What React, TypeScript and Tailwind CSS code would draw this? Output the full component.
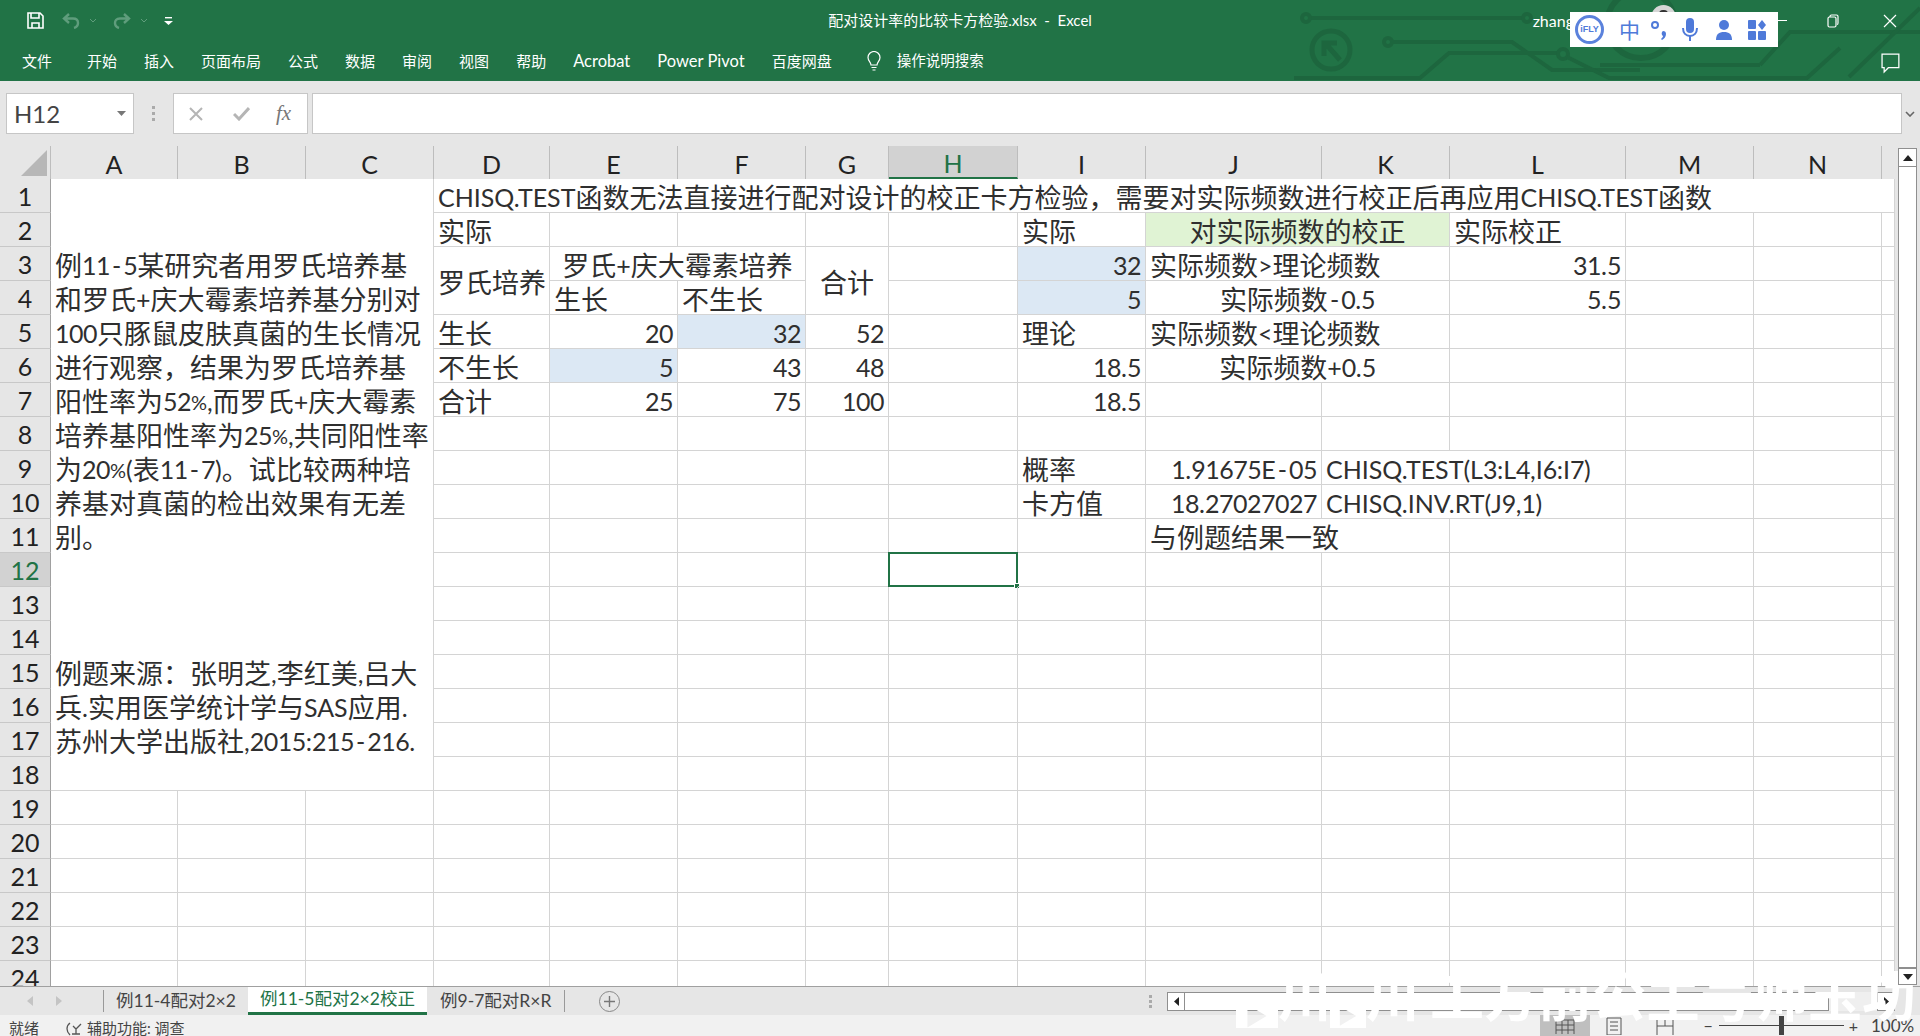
// Excel window: ribbon tabs, formula bar, one sheet with merged cells, sheet tabs and status bar.
import { Fragment } from "react";

type Cell = { text?: string; span?: string; className?: string };

const COLS = ["A", "B", "C", "D", "E", "F", "G", "H", "I", "J", "K", "L", "M", "N", "O"];
const COL_WIDTHS = [127, 128, 128, 116, 128, 128, 83, 129, 128, 176, 128, 176, 128, 128, 13];
const ROWS = Array.from({ length: 24 }, (_, i) => i + 1);

const RIGHT = "justify-end";
const CENTER = "justify-center";
const BLUE = "bg-[#dce8f4]";

// Merged cells are listed by their first cell, the rest are in COVERED.
const CELLS: Record<string, Cell> = {
  D1: { text: "CHISQ.TEST函数无法直接进行配对设计的校正卡方检验，需要对实际频数进行校正后再应用CHISQ.TEST函数", span: "col-span-12" },
  D2: { text: "实际" },
  I2: { text: "实际" },
  J2: { text: "对实际频数的校正", span: "col-span-2", className: `${CENTER} bg-[#e0f3d4]` },
  L2: { text: "实际校正" },
  D3: { text: "罗氏培养", span: "row-span-2" },
  E3: { text: "罗氏+庆大霉素培养", span: "col-span-2", className: CENTER },
  G3: { text: "合计", span: "row-span-2", className: CENTER },
  I3: { text: "32", className: `${RIGHT} ${BLUE}` },
  J3: { text: "实际频数>理论频数", span: "col-span-2" },
  L3: { text: "31.5", className: RIGHT },
  E4: { text: "生长" },
  F4: { text: "不生长" },
  I4: { text: "5", className: `${RIGHT} ${BLUE}` },
  J4: { text: "实际频数-0.5", span: "col-span-2", className: CENTER },
  L4: { text: "5.5", className: RIGHT },
  D5: { text: "生长" },
  E5: { text: "20", className: RIGHT },
  F5: { text: "32", className: `${RIGHT} ${BLUE}` },
  G5: { text: "52", className: RIGHT },
  I5: { text: "理论" },
  J5: { text: "实际频数<理论频数", span: "col-span-2" },
  D6: { text: "不生长" },
  E6: { text: "5", className: `${RIGHT} ${BLUE}` },
  F6: { text: "43", className: RIGHT },
  G6: { text: "48", className: RIGHT },
  I6: { text: "18.5", className: RIGHT },
  J6: { text: "实际频数+0.5", span: "col-span-2", className: CENTER },
  D7: { text: "合计" },
  E7: { text: "25", className: RIGHT },
  F7: { text: "75", className: RIGHT },
  G7: { text: "100", className: RIGHT },
  I7: { text: "18.5", className: RIGHT },
  I9: { text: "概率" },
  J9: { text: "1.91675E-05", className: RIGHT },
  K9: { text: "CHISQ.TEST(L3:L4,I6:I7)", span: "col-span-2" },
  I10: { text: "卡方值" },
  J10: { text: "18.27027027", className: RIGHT },
  K10: { text: "CHISQ.INV.RT(J9,1)", span: "col-span-2" },
  J11: { text: "与例题结果一致", span: "col-span-2" },
};

const COVERED = new Set([
  "K2", "F3", "K3", "D4", "G4", "K4", "K5", "K6", "L9", "L10", "K11",
  "E1", "F1", "G1", "H1", "I1", "J1", "K1", "L1", "M1", "N1", "O1",
]);

const NOTE_LINES = [
  "", "",
  "例11-5某研究者用罗氏培养基",
  "和罗氏+庆大霉素培养基分别对",
  "100只豚鼠皮肤真菌的生长情况",
  "进行观察，结果为罗氏培养基",
  "阳性率为52%,而罗氏+庆大霉素",
  "培养基阳性率为25%,共同阳性率",
  "为20%(表11-7)。试比较两种培",
  "养基对真菌的检出效果有无差",
  "别。",
  "", "", "",
  "例题来源：张明芝,李红美,吕大",
  "兵.实用医学统计学与SAS应用.",
  "苏州大学出版社,2015:215-216.",
  "",
];

const MENU = ["开始", "插入", "页面布局", "公式", "数据", "审阅", "视图", "帮助", "Acrobat", "Power Pivot", "百度网盘"];

// Cell font: digits are narrower than Lato's, the percent sign too, the hyphen is wider.
function CellText({ text }: { text: string }) {
  const parts = text.split(/([0-9]+|%|-|[A-Za-z.:(),+<>]+)/).filter(Boolean);
  return (
    <>
      {parts.map((p, i) => {
        if (/^[0-9]/.test(p)) return <span key={i} className="text-[25px] tracking-[-0.5px]">{p}</span>;
        if (p === "%") return <span key={i} className="text-[20px]">{p}</span>;
        if (p === "-") return <span key={i} className="px-[2px] text-[25px]">{p}</span>;
        if (/^[A-Za-z.:(),+<>]/.test(p)) return <span key={i} className="text-[25px]">{p}</span>;
        return <Fragment key={i}>{p}</Fragment>;
      })}
    </>
  );
}

function CircuitArt() {
  return (
    <svg className="absolute left-[1280px] top-0 h-[81px] w-[640px]" viewBox="1280 0 640 81" fill="none" stroke="#1d663e" strokeWidth="4">
      <path d="M1310 18H1522" />
      <circle cx="1306" cy="18" r="4" />
      <circle cx="1527" cy="18" r="4" />
      <circle cx="1331" cy="50" r="19" strokeWidth="5" />
      <path d="M1340 60L1326 44M1324 56V43H1337" strokeWidth="5" />
      <circle cx="1388" cy="42" r="4" />
      <path d="M1392 42H1512L1552 70H1640" />
      <path d="M1294 78H1420L1449 53H1558" />
      <circle cx="1563" cy="54" r="5" />
      <path d="M1567 57L1609 78H1807L1840 48" />
      <path d="M1760 65L1790 32H1920" />
      <path d="M1600 65H1760" />
      <path d="M1849 77L1920 8" />
      <circle cx="1641" cy="24" r="34" strokeWidth="6" />
    </svg>
  );
}

function ImeToolbar() {
  return (
    <div className="absolute left-[1570px] top-[12px] flex h-[35px] w-[208px] items-center bg-white pl-[5px] text-[#4f7ad9]">
      <div className="flex h-[29px] w-[29px] items-center justify-center rounded-full border-[3px] border-[#5b82dc] font-['Liberation_Sans'] text-[9px] font-bold">iFLY</div>
      <span className="ml-[15px] text-[21px] leading-none">中</span>
      <svg className="ml-[11px]" width="18" height="24" viewBox="0 0 18 24" fill="currentColor">
        <circle cx="4" cy="7" r="3" fill="none" stroke="currentColor" strokeWidth="2" />
        <path d="M12 13a3 3 0 0 1 3 3c0 3-2 5-4 6l-1-1c1-1 2-2 2-3a3 3 0 0 1 0-5z" />
      </svg>
      <svg className="ml-[13px]" width="16" height="25" viewBox="0 0 16 25" fill="currentColor">
        <rect x="4" y="1" width="8" height="15" rx="4" />
        <path d="M1 11c0 5 3 8 7 8s7-3 7-8" fill="none" stroke="currentColor" strokeWidth="2" />
        <rect x="7" y="18" width="2" height="6" />
      </svg>
      <svg className="ml-[17px]" width="18" height="22" viewBox="0 0 18 22" fill="currentColor">
        <circle cx="9" cy="6" r="5" />
        <path d="M1 21c0-6 3-8 8-8s8 2 8 8z" />
      </svg>
      <svg className="ml-[15px]" width="19" height="20" viewBox="0 0 19 20" fill="currentColor">
        <rect x="0" y="0" width="8" height="9" rx="1" />
        <path d="M14 0l4 5-4 5-4-5z" />
        <rect x="0" y="11" width="8" height="9" rx="1" />
        <rect x="10" y="11" width="8" height="9" rx="1" />
      </svg>
    </div>
  );
}

function TitleBar() {
  return (
    <div className="relative h-[81px] overflow-hidden bg-[#217346] text-white">
      <CircuitArt />
      <div className="relative grid h-[41px] grid-cols-[1fr_auto_1fr] items-center">
        <div className="flex items-center pl-[27px]">
          <svg width="17" height="17" viewBox="0 0 17 17" fill="none" stroke="#fff" strokeWidth="1.6">
            <path d="M1 1H13L16 4V16H1Z" />
            <path d="M4 1V6H12V1" />
            <path d="M5 16V11H12V16" />
          </svg>
          <svg className="ml-[18px]" width="18" height="16" viewBox="0 0 18 16" fill="none" stroke="#5f9d7c" strokeWidth="2.4">
            <path d="M7 1L2 5.5L7 10M2 5.5H11C15 5.5 16 8 16 10C16 12.5 15 14 12 15" />
          </svg>
          <svg className="ml-[9px]" width="8" height="5" viewBox="0 0 8 5" fill="none" stroke="#5f9d7c"><path d="M1 1L4 4L7 1" /></svg>
          <svg className="ml-[16px]" width="18" height="16" viewBox="0 0 18 16" fill="none" stroke="#5f9d7c" strokeWidth="2.4">
            <path d="M11 1L16 5.5L11 10M16 5.5H7C3 5.5 2 8 2 10C2 12.5 3 14 6 15" />
          </svg>
          <svg className="ml-[9px]" width="8" height="5" viewBox="0 0 8 5" fill="none" stroke="#5f9d7c"><path d="M1 1L4 4L7 1" /></svg>
          <svg className="ml-[16px]" width="9" height="8" viewBox="0 0 9 8" fill="#fff"><rect x="1" y="0" width="7" height="1.4" /><path d="M0 4H9L4.5 8z" /></svg>
        </div>
        <div className="text-[15px]">配对设计率的比较卡方检验.xlsx&nbsp; - &nbsp;Excel</div>
        <div className="flex items-center justify-end">
          <span className="mr-[77px] text-[16px]">zhang</span>
          <div className="relative mr-[101px] h-[26px] w-[25px] -translate-y-[3px] rounded-full bg-[#d6d6d6]">
            <span className="absolute left-[8px] top-[5px] h-[8px] w-[9px] rounded-full bg-[#333]" />
          </div>
          <span className="mr-[40px] h-[1.5px] w-[10px] bg-white" />
          <svg className="mr-[44px]" width="12" height="14" viewBox="0 0 12 14" fill="none" stroke="#fff" strokeWidth="1.2">
            <rect x="1" y="3" width="8" height="10" rx="1.5" />
            <path d="M3 3V2.5C3 1.5 3.5 1 4.5 1H9.5C10.5 1 11 1.5 11 2.5V9C11 10 10.5 10.5 10 10.5" />
          </svg>
          <svg className="mr-[23px]" width="14" height="14" viewBox="0 0 14 14" stroke="#fff" strokeWidth="1.2"><path d="M1 1L13 13M13 1L1 13" /></svg>
        </div>
      </div>
      <div className="relative flex h-[40px] items-center pl-[22px] text-[15px]">
        <span className="mr-[35px]">文件</span>
        <div className="flex items-center gap-[27px]">
          {MENU.map((m) => (
            <span key={m} className={/^[A-Z]/.test(m) ? "text-[16.5px]" : ""}>{m}</span>
          ))}
        </div>
        <svg className="ml-[34px]" width="16" height="20" viewBox="0 0 16 20" fill="none" stroke="#fff" strokeWidth="1.2">
          <path d="M5 14C5 11 2 10 2 6.5A6 6 0 0 1 14 6.5C14 10 11 11 11 14Z" />
          <path d="M5.5 16.5H10.5M6.5 19H9.5" />
        </svg>
        <span className="ml-[15px] text-[14.5px]">操作说明搜索</span>
        <svg className="absolute left-[1881px] top-[12px]" width="26" height="22" viewBox="0 0 26 22" fill="none" stroke="#fff" strokeWidth="1.2">
          <path d="M1 1H17V14H7L3 18V14H1Z" transform="scale(1.05)" />
        </svg>
      </div>
      <ImeToolbar />
    </div>
  );
}

function FormulaBar() {
  return (
    <div className="flex h-[65px] items-center bg-[#e6e6e6] pl-[6px] pr-[5px]">
      <div className="flex h-[41px] w-[128px] items-center justify-between border border-[#c6c6c6] bg-white pl-[7px] pr-[7px]">
        <span className="text-[24px] text-[#444]">H12</span>
        <svg width="9" height="5" viewBox="0 0 9 5" fill="#777"><path d="M0 0H9L4.5 5z" /></svg>
      </div>
      <div className="flex w-[39px] flex-col items-center gap-[3px]">
        <span className="h-[3px] w-[3px] bg-[#aaa]" />
        <span className="h-[3px] w-[3px] bg-[#aaa]" />
        <span className="h-[3px] w-[3px] bg-[#aaa]" />
      </div>
      <div className="flex h-[41px] w-[135px] items-center border border-[#c6c6c6] bg-white pl-[15px]">
        <svg width="14" height="14" viewBox="0 0 14 14" stroke="#b5b5b5" strokeWidth="2"><path d="M1 1L13 13M13 1L1 13" /></svg>
        <svg className="ml-[30px]" width="17" height="14" viewBox="0 0 17 14" fill="none" stroke="#b5b5b5" strokeWidth="3"><path d="M1 7L6 12L16 1" /></svg>
        <span className="ml-[26px] font-['Liberation_Serif'] text-[21px] italic text-[#777]">fx</span>
      </div>
      <div className="ml-[4px] h-[41px] flex-1 border border-[#c6c6c6] bg-white" />
      <svg className="ml-[3px]" width="10" height="6" viewBox="0 0 10 6" fill="none" stroke="#666" strokeWidth="1.6"><path d="M1 1L5 5L9 1" /></svg>
    </div>
  );
}

function Sheet() {
  return (
    <div className="flex h-[807px] overflow-hidden">
      <div className="w-[51px] shrink-0 bg-[#e6e6e6] text-[25px] text-[#222]">
        {ROWS.map((r) => (
          <div
            key={r}
            className={
              "flex h-[34px] items-center justify-center border-b border-r border-b-[#c8c8c8] border-r-[#a0a0a0] pt-[2px] " +
              (r === 12 ? "bg-[#d2d2d2] text-[#217346]" : "")
            }
          >
            {r}
          </div>
        ))}
      </div>
      <div className="grid w-[1844px] shrink-0 auto-rows-[34px] grid-cols-[127px_128px_128px_116px_128px_128px_83px_129px_128px_176px_128px_176px_128px_128px_13px] border-r border-[#a0a0a0] bg-white text-[27px] text-[#2f2f2f]">
        <div className="col-span-3 row-span-18 border-b border-r border-[#d4d4d4] px-[4px]">
          {NOTE_LINES.map((line, i) => (
            <div key={i} className="flex h-[34px] items-center whitespace-nowrap pt-[4px]">
              <CellText text={line} />
            </div>
          ))}
        </div>
        {ROWS.map((r) =>
          COLS.map((c) => {
            const id = `${c}${r}`;
            if (COVERED.has(id)) return null;
            if (r <= 18 && (c === "A" || c === "B" || c === "C")) return null;
            const cell = CELLS[id];
            const selected = id === "H12";
            return (
              <div
                key={id}
                className={
                  "relative flex items-center whitespace-nowrap border-b border-r border-[#d4d4d4] px-[4px] pt-[5px] " +
                  (cell?.span ?? "") + " " + (cell?.className ?? "")
                }
              >
                {cell?.text ? <CellText text={cell.text} /> : null}
                {selected ? (
                  <div className="absolute -left-px -top-px bottom-[-1px] right-[-1px] border-2 border-[#217346]">
                    <span className="absolute -bottom-[4px] -right-[4px] h-[6px] w-[6px] border border-white bg-[#217346]" />
                  </div>
                ) : null}
              </div>
            );
          })
        )}
      </div>
      <div className="w-[25px] shrink-0 bg-[#e6e6e6]" />
    </div>
  );
}

function ColumnHeader() {
  return (
    <div className="relative flex h-[33px] bg-[#e6e6e6] text-[25px] text-[#222]">
      <div className="relative w-[51px] shrink-0 border-r border-[#bdbdbd]">
        <svg className="absolute left-[21px] top-[4px]" width="26" height="26" viewBox="0 0 26 26" fill="#b7b7b7"><path d="M26 0V26H0z" /></svg>
      </div>
      {COLS.map((c, i) => (
        <div
          key={c}
          style={{ width: COL_WIDTHS[i] }}
          className={
            "flex items-center justify-center pt-[4px] " +
            (c === "O" ? "" : "border-r border-[#bdbdbd] ") +
            (c === "H" ? "border-b-2 border-b-[#217346] bg-[#d2d2d2] text-[#217346]" : "")
          }
        >
          {c === "O" ? "" : c}
        </div>
      ))}
    </div>
  );
}

function SheetTabs() {
  return (
    <div className="flex h-[29px] items-stretch border-t border-[#a0a0a0] bg-[#e6e6e6] text-[17.5px] text-[#444]">
      <div className="flex w-[103px] items-center pl-[27px]">
        <svg width="6" height="10" viewBox="0 0 6 10" fill="#c4c4c4"><path d="M6 0V10L0 5z" /></svg>
        <svg className="ml-[23px]" width="6" height="10" viewBox="0 0 6 10" fill="#c4c4c4"><path d="M0 0V10L6 5z" /></svg>
      </div>
      <div className="my-[3px] flex w-[145px] items-center border-l border-[#999] pl-[12px]">例11-4配对2×2</div>
      <div className="flex w-[179px] items-center border-b-[3px] border-[#217346] bg-white pl-[12px] text-[#217346]">例11-5配对2×2校正</div>
      <div className="my-[3px] flex w-[138px] items-center border-r border-[#999] pl-[13px]">例9-7配对R×R</div>
      <div className="ml-[34px] flex h-[21px] w-[21px] items-center justify-center self-center rounded-full border border-[#888]">
        <svg width="11" height="11" viewBox="0 0 11 11" stroke="#777" strokeWidth="1.4"><path d="M5.5 0V11M0 5.5H11" /></svg>
      </div>
      <div className="ml-auto flex items-center">
        <div className="mr-[15px] flex flex-col gap-[2px]">
          <span className="h-[3px] w-[3px] bg-[#aaa]" />
          <span className="h-[3px] w-[3px] bg-[#aaa]" />
          <span className="h-[3px] w-[3px] bg-[#aaa]" />
        </div>
        <div className="flex h-[19px] w-[18px] items-center justify-center border border-[#8f8f8f] bg-white">
          <svg width="5" height="9" viewBox="0 0 5 9" fill="#222"><path d="M5 0V9L0 4.5z" /></svg>
        </div>
        <div className="h-[19px] w-[644px] border-y border-r border-[#8f8f8f] bg-white" />
        <div className="h-[19px] w-[48px] bg-[#efefef]" />
        <div className="flex h-[19px] w-[18px] items-center justify-center border border-[#8f8f8f] bg-white">
          <svg width="5" height="9" viewBox="0 0 5 9" fill="#222"><path d="M0 0V9L5 4.5z" /></svg>
        </div>
        <div className="w-[25px]" />
      </div>
    </div>
  );
}

function StatusBar() {
  return (
    <div className="flex h-[21px] items-start overflow-hidden bg-[#f1f1f1] text-[15px] text-[#444]">
      <span className="ml-[9px] leading-[26px]">就绪</span>
      <svg className="ml-[26px] mt-[6px]" width="20" height="16" viewBox="0 0 20 16" fill="none" stroke="#555" strokeWidth="1.3">
        <path d="M5 2C1 5 1 10 5 14" />
        <path d="M8 5L11 8L16 3M11 8V13M7 13L15 13" />
      </svg>
      <span className="ml-[2px] leading-[26px]">辅助功能: 调查</span>
      <div className="ml-auto flex h-full items-center">
        <div className="flex h-full w-[50px] items-center justify-center bg-[#bfbfbf]">
          <svg width="22" height="16" viewBox="0 0 22 16" fill="none" stroke="#555"><path d="M2 2H20V16M2 2V16M8 2V16M14 2V16M2 7H20M2 12H20" /></svg>
        </div>
        <svg className="ml-[16px]" width="16" height="18" viewBox="0 0 16 18" fill="none" stroke="#555"><path d="M1 1H15V18H1ZM4 5H12M4 9H12M4 13H12" /></svg>
        <svg className="ml-[34px]" width="18" height="18" viewBox="0 0 18 18" fill="none" stroke="#555"><path d="M1 1V18M17 1V18M9 1V9M1 9H17" /></svg>
        <span className="ml-[29px] text-[16px]">−</span>
        <div className="relative ml-[6px] h-[1px] w-[125px] bg-[#444]">
          <span className="absolute left-[60px] top-[-9px] h-[19px] w-[5px] bg-[#444]" />
        </div>
        <span className="ml-[5px] text-[16px]">+</span>
        <span className="ml-[13px] w-[49px] text-[17px]">100%</span>
      </div>
    </div>
  );
}

function Watermark() {
  return (
    <div className="pointer-events-none absolute left-[1236px] top-[962px] flex h-[66px] w-[684px] items-start overflow-hidden text-[54px] font-bold leading-[70px] text-white">
      <svg className="mt-[36px]" width="42" height="36" viewBox="0 0 44 36" fill="#fff"><path d="M0 0H44V36H0ZM12 6V30L32 18Z" fillRule="evenodd" /></svg>
      <span className="w-[52px]">川</span>
      <svg className="mt-[36px]" width="36" height="36" viewBox="0 0 44 36" fill="#fff"><path d="M0 0H44V36H0ZM12 6V30L32 18Z" fillRule="evenodd" /></svg>
      <span className="w-[64px]">川</span>
      <span className="tracking-[0px]">工方前公主号师玉功</span>
    </div>
  );
}

export default function App() {
  return (
    <div className="relative h-[1036px] w-[1920px] overflow-hidden bg-[#e6e6e6] font-['Lato','Noto_Sans_CJK_SC',sans-serif]">
      <TitleBar />
      <FormulaBar />
      <ColumnHeader />
      <Sheet />
      <SheetTabs />
      <StatusBar />
      <Watermark />
      {/* vertical scrollbar lies over the grey strip to the right of the grid */}
      <div className="absolute left-[1898px] top-[148px] flex h-[820px] w-[19px] flex-col">
        <div className="flex h-[19px] shrink-0 items-center justify-center border border-[#8f8f8f] bg-white">
          <svg width="10" height="6" viewBox="0 0 10 6" fill="#222"><path d="M0 6H10L5 0z" /></svg>
        </div>
        <div className="flex-1 border-x border-b border-[#8f8f8f] bg-white" />
      </div>
      <div className="absolute left-[1898px] top-[968px] flex h-[17px] w-[19px] items-center justify-center border border-[#8f8f8f] bg-white">
        <svg width="10" height="6" viewBox="0 0 10 6" fill="#222"><path d="M0 0H10L5 6z" /></svg>
      </div>
    </div>
  );
}
